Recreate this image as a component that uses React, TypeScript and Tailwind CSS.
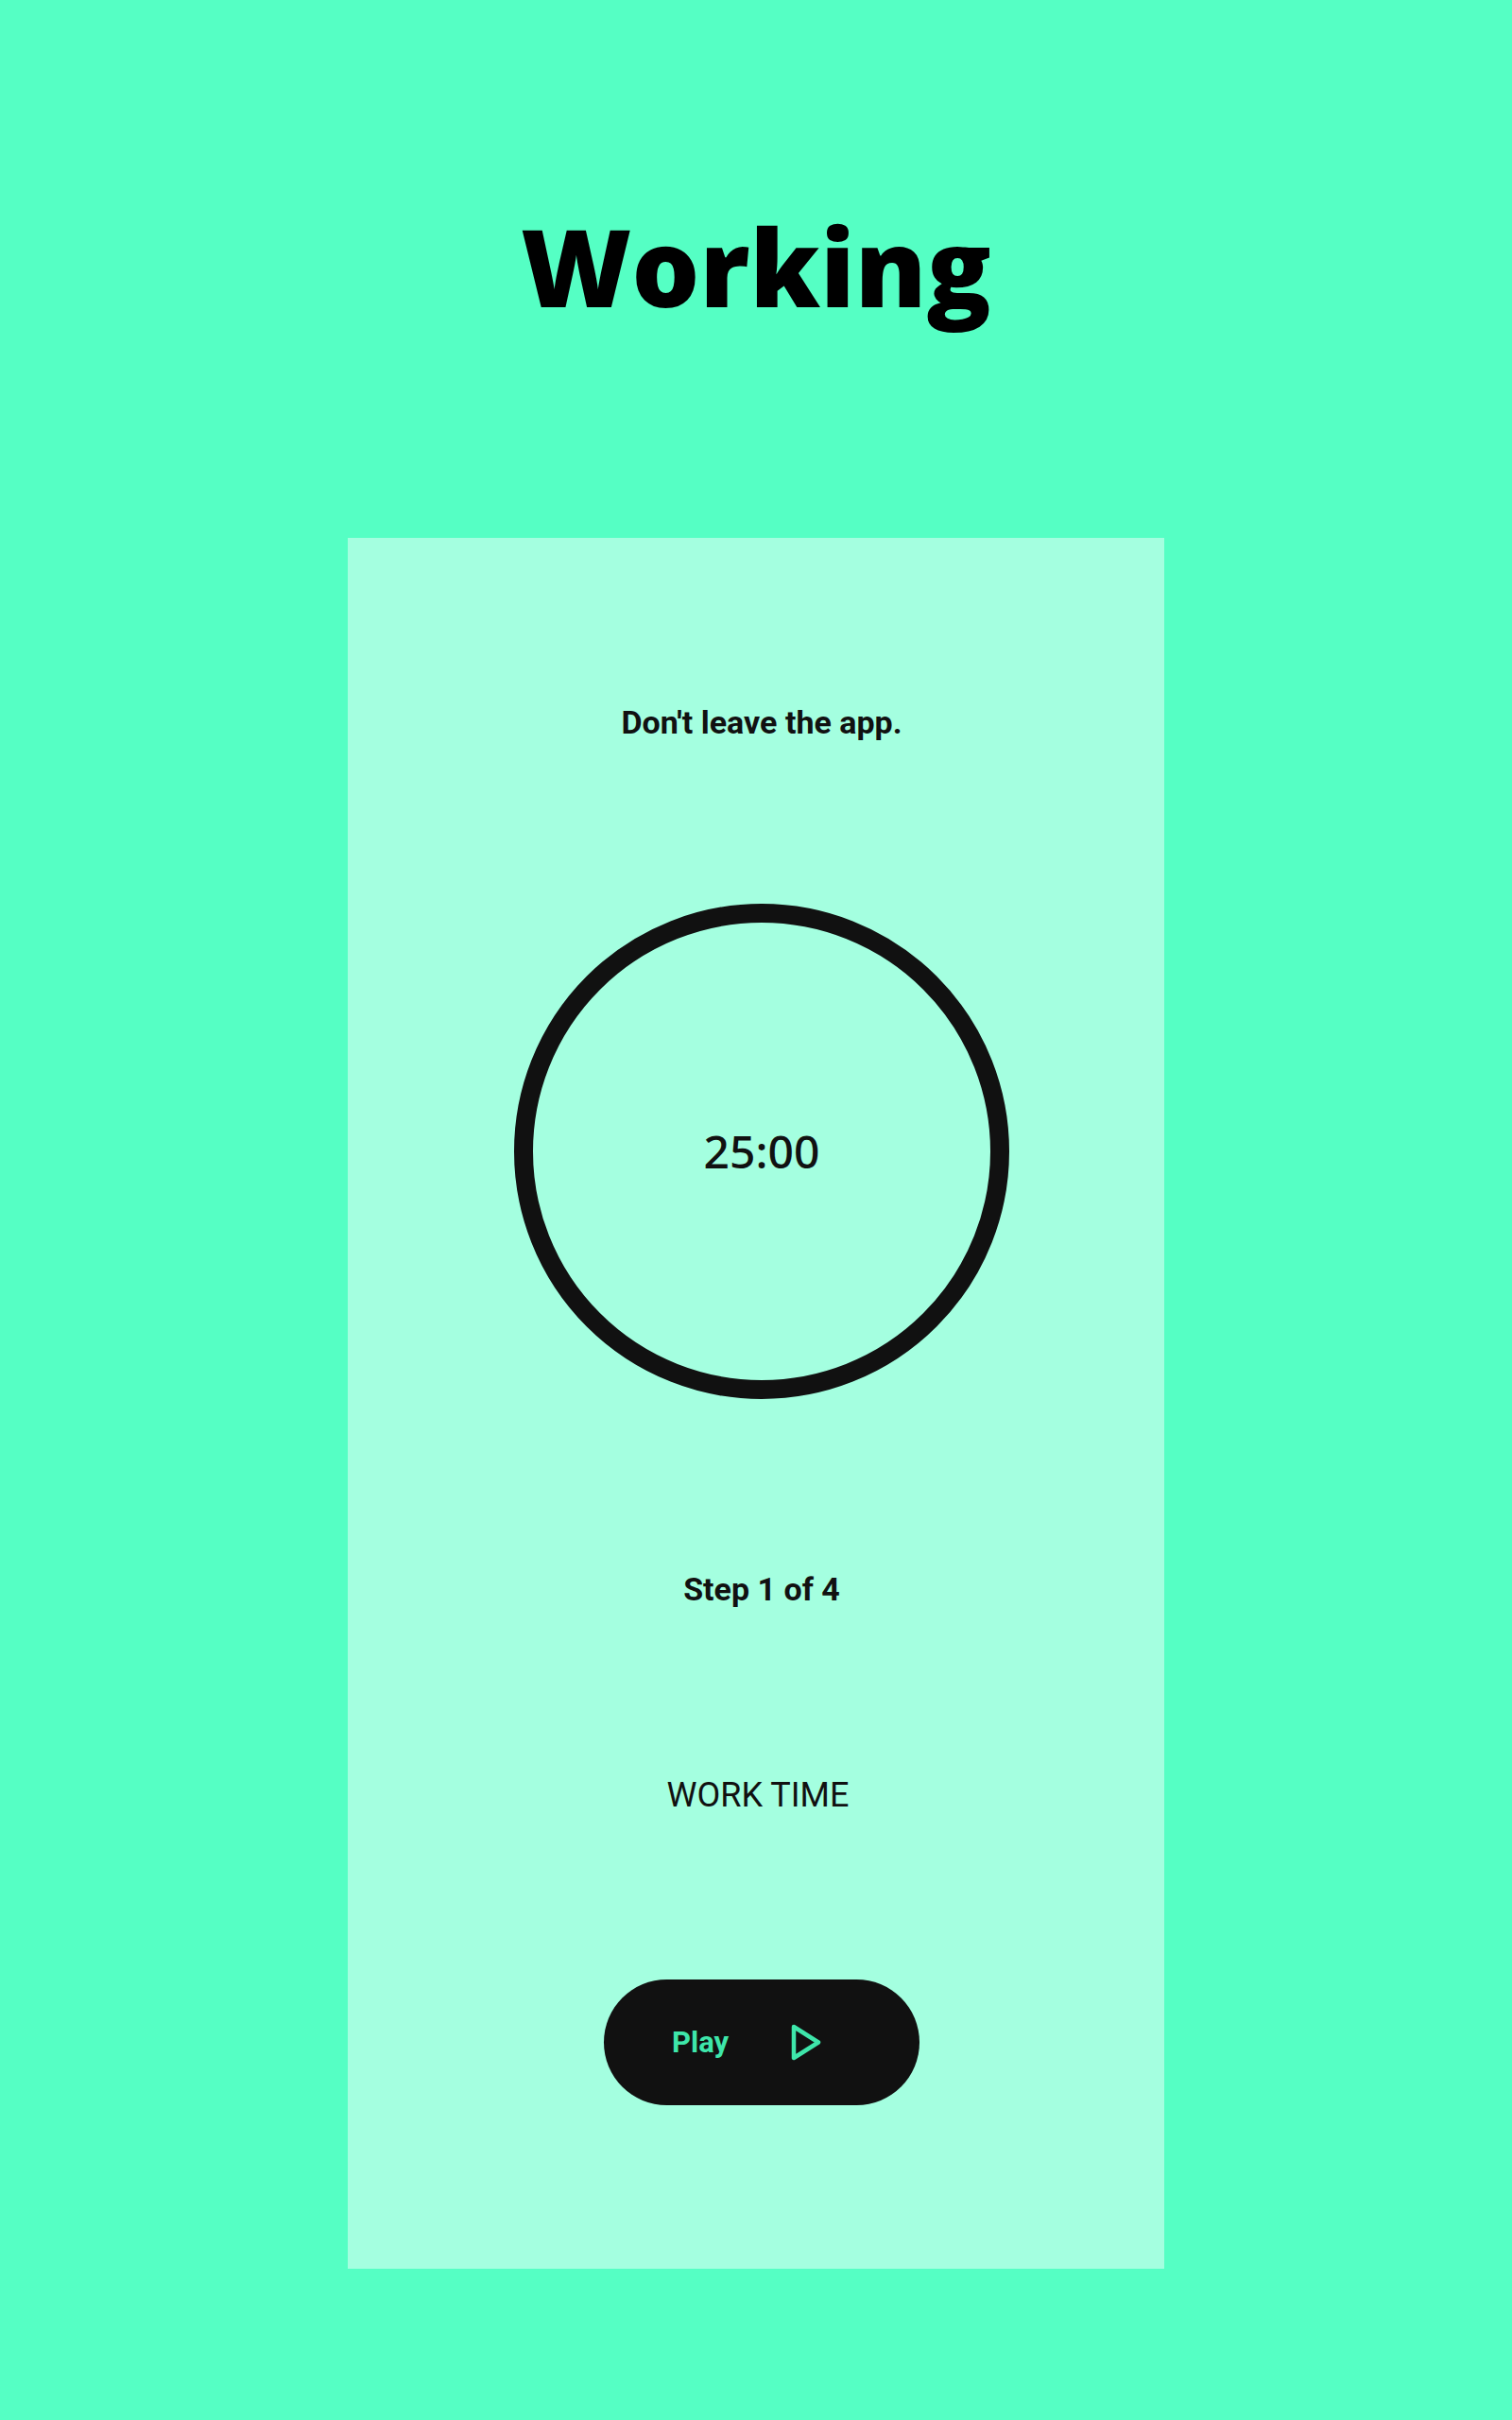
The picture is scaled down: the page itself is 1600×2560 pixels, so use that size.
import React from "react";

export default function App() {
  return (
    <div className="min-h-[2560px] w-full bg-[#55ffc4] flex flex-col items-center pt-[225px]">
      <h1
        className="text-[113px] leading-none font-extrabold text-black h-[113px]"
        style={{ fontFamily: '"Open Sans", "Noto Sans", sans-serif' }}
      >
        Working
      </h1>
      <div
        className="mt-[231px] w-[864px] h-[1831px] bg-[#a4ffe0] flex flex-col items-center pt-[178px] pl-[12px] text-[#111111]"
        style={{ fontFamily: 'Roboto, "Liberation Sans", sans-serif' }}
      >
        <p className="text-[34px] leading-none font-bold h-[34px]">Don&apos;t leave the app.</p>
        <div className="mt-[175px] w-[524px] h-[524px] rounded-full border-[20px] border-[#111111] flex items-center justify-center">
          <span
            className="text-[48px] leading-none font-medium text-[#111111]"
            style={{ fontFamily: '"Noto Sans", "Open Sans", sans-serif' }}
          >
            25:00
          </span>
        </div>
        <p className="mt-[184px] text-[34px] leading-none font-bold h-[34px]">Step 1 of 4</p>
        <p className="mt-[183px] mr-[8px] text-[36px] leading-none h-[36px]">WORK TIME</p>
        <button className="mt-[177px] w-[334px] h-[133px] rounded-full bg-[#111111] flex items-center pl-[72px] gap-[66px]">
          <span className="text-[31px] leading-none font-bold text-[#3ee6aa]">Play</span>
          <svg width="32" height="39" viewBox="0 0 32 39" fill="none">
            <polygon
              points="3,3 29,19.5 3,36"
              stroke="#3ee6aa"
              strokeWidth="4.5"
              strokeLinejoin="round"
            />
          </svg>
        </button>
      </div>
    </div>
  );
}
